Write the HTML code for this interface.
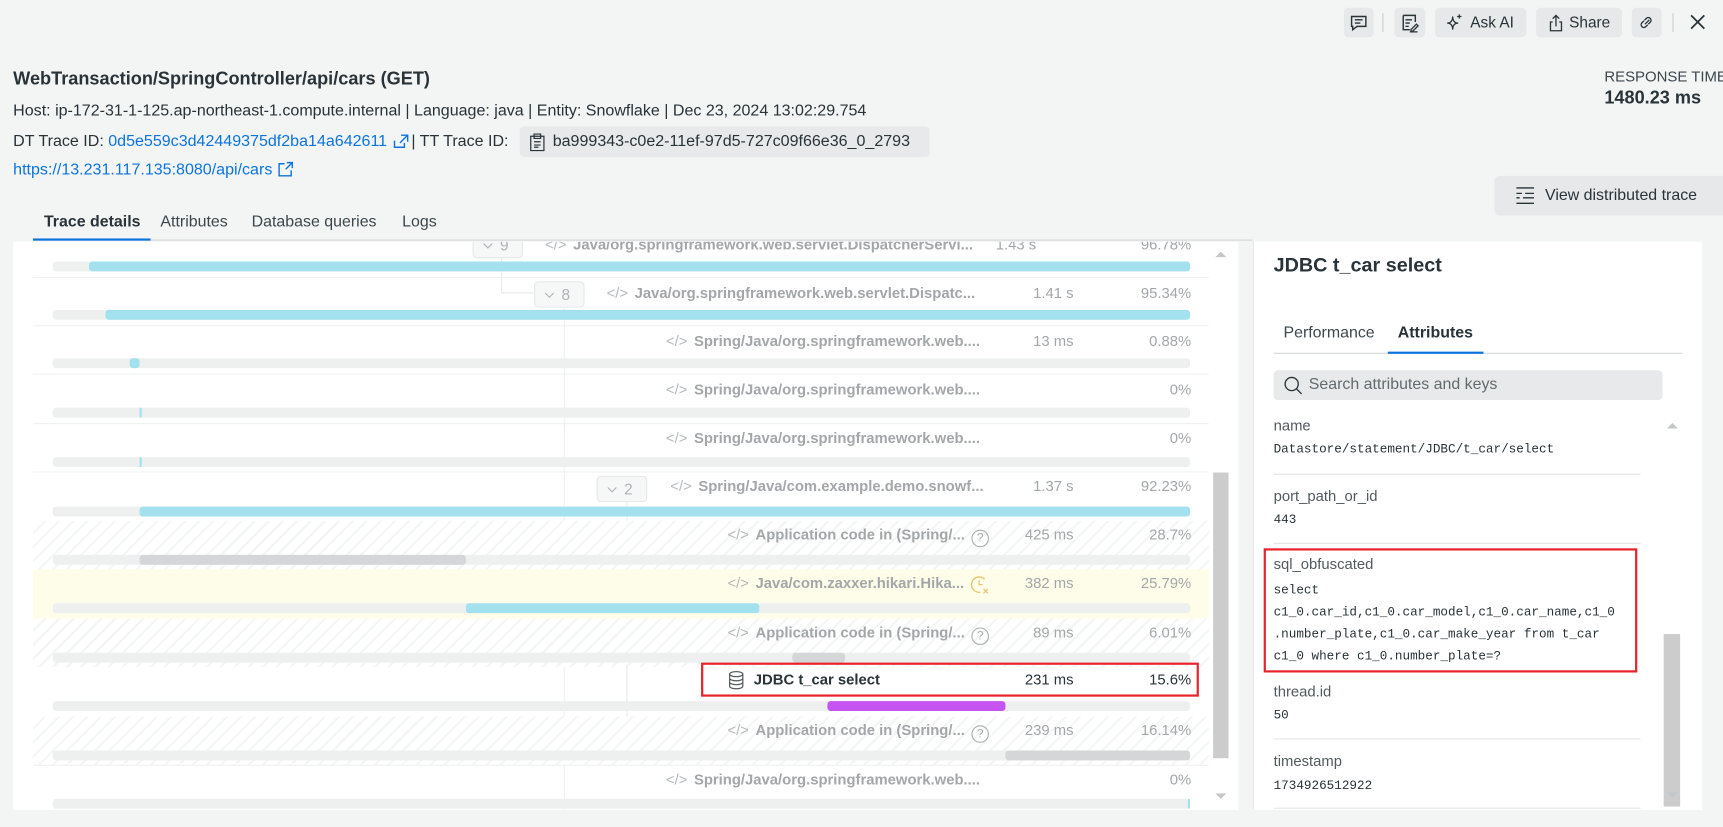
<!DOCTYPE html>
<html><head><meta charset="utf-8"><style>
*{box-sizing:border-box;margin:0;padding:0}
html,body{width:1723px;height:827px;overflow:hidden;background:#f3f4f4}
#w{position:absolute;left:0;top:0;width:1568px;height:752px;overflow:hidden;transform:scale(1.09885);transform-origin:0 0;font-family:"Liberation Sans",sans-serif;color:#293338}
.a{position:absolute;white-space:nowrap}
.btn{position:absolute;top:7px;height:27px;background:#e6e8e9;border-radius:4px;font-size:14px;line-height:27px;color:#293338}
.lnk{color:#0c74df}
.panel{position:absolute;background:#fff}
.row{position:absolute;left:30px;width:1070px;height:44px}
.hat{background:repeating-linear-gradient(135deg,#fff 0 7px,#f4f5f5 7px 9px)}
.bar{position:absolute;left:48px;width:1035px;height:9px;background:#eef0f0;border-radius:3px}
.f{position:absolute;top:0;height:9px;border-radius:3px}
.lbl{position:absolute;font-size:13.5px;color:#a3a7a9;font-weight:bold;white-space:nowrap}
.tm{position:absolute;font-size:13.5px;color:#a3a7a9;text-align:right;width:80px}
.pc{position:absolute;font-size:13.5px;color:#a3a7a9;text-align:right;width:80px;left:974px}
.cnt{position:absolute;width:46px;height:24px;border:1px solid #e6e8e9;background:#f6f7f7;border-radius:4px;font-size:14px;color:#b0b4b6;line-height:22px;padding-left:24px}
.cnt:before{content:"";position:absolute;left:10px;top:7px;width:5px;height:5px;border-right:1px solid #b0b4b6;border-bottom:1px solid #b0b4b6;transform:rotate(45deg)}
.code{font-weight:normal;margin-right:6px;color:#b5b9bb}
.k{position:absolute;left:1159px;font-size:13.5px;color:#525a5e}
.v{position:absolute;left:1159px;font-family:"Liberation Mono",monospace;font-size:11.5px;color:#293338}
.hr{position:absolute;left:1159px;width:334px;height:1px;background:#e3e5e6}
.q{display:inline-block;width:16px;height:16px;border:1.3px solid #a9adaf;border-radius:50%;font-size:11px;text-align:center;line-height:14px;color:#a9adaf;font-weight:normal;margin-left:6px;vertical-align:-2px}
</style></head><body><div id="w">

<!-- top buttons -->
<div class="btn" style="left:1223px;width:27px"><svg width="27" height="27" viewBox="0 0 27 27"><path d="M7 8h13v9h-8l-4 3v-3H7z" fill="none" stroke="#293338" stroke-width="1.3"/><path d="M10 11h7M10 14h5" stroke="#293338" stroke-width="1.2"/></svg></div>
<div class="a" style="left:1258px;top:12px;width:1px;height:17px;background:#c9cdcf"></div>
<div class="btn" style="left:1269px;width:28px"><svg width="27" height="27" viewBox="0 0 27 27"><path d="M8 7h11v6M8 7v13h6" fill="none" stroke="#293338" stroke-width="1.3"/><path d="M10 11h6M10 14h4M10 17h3M15 20l5-5 1.5 1.5-5 5H15z M14 22h7" fill="none" stroke="#293338" stroke-width="1.2"/></svg></div>
<div class="btn" style="left:1306px;width:83px;padding-left:32px">Ask AI<svg style="position:absolute;left:8px;top:5px" width="18" height="18" viewBox="0 0 18 18"><path d="M8 3c0 4 2 6 5 6-3 0-5 2-5 6 0-4-2-6-5-6 3 0 5-2 5-6z" fill="none" stroke="#293338" stroke-width="1.2"/><path d="M14 1v4M12 3h4" stroke="#293338" stroke-width="1.1"/></svg></div>
<div class="btn" style="left:1398px;width:78px;padding-left:30px">Share<svg style="position:absolute;left:9px;top:5px" width="18" height="18" viewBox="0 0 18 18"><path d="M6 8H4v8h10V8h-2M9 12V2M6 5l3-3 3 3" fill="none" stroke="#293338" stroke-width="1.2"/></svg></div>
<div class="btn" style="left:1485px;width:27px"><svg width="27" height="27" viewBox="0 0 27 27"><path d="M12 15l4-4M11 12l-2 2a2.5 2.5 0 003.5 3.5l2-2M15 15l2-2a2.5 2.5 0 00-3.5-3.5l-2 2" fill="none" stroke="#293338" stroke-width="1.2"/></svg></div>
<div class="a" style="left:1522px;top:12px;width:1px;height:17px;background:#c9cdcf"></div>
<svg class="a" style="left:1535px;top:10px" width="20" height="20" viewBox="0 0 20 20"><path d="M4 4l12 12M16 4L4 16" stroke="#293338" stroke-width="1.6"/></svg>

<!-- header -->
<div class="a" style="left:12px;top:63px;font-size:16.5px;font-weight:bold">WebTransaction/SpringController/api/cars (GET)</div>
<div class="a" style="left:12px;top:93px;font-size:14.6px">Host: ip-172-31-1-125.ap-northeast-1.compute.internal | Language: java | Entity: Snowflake | Dec 23, 2024 13:02:29.754</div>
<div class="a" style="left:12px;top:120px;font-size:14.6px">DT Trace ID: <span class="lnk">0d5e559c3d42449375df2ba14a642611</span> <svg width="18" height="16" viewBox="0 0 18 16" style="vertical-align:-3px"><path d="M3 8v6h9v-4M9 3h6v6M15 3l-7 7" fill="none" stroke="#0c74df" stroke-width="1.3"/></svg>| TT Trace ID:</div>
<div class="a" style="left:473px;top:115px;width:373px;height:28px;background:#e7e9ea;border-radius:4px;font-size:14.6px;line-height:28px;padding-left:30px">ba999343-c0e2-11ef-97d5-727c09f66e36_0_2793<svg style="position:absolute;left:9px;top:6px" width="14" height="17" viewBox="0 0 14 17"><path d="M1 3h12v13H1zM4 1h6v4H4zM4 8h6M4 11h6M4 13h4" fill="none" stroke="#293338" stroke-width="1.1"/></svg></div>
<div class="a lnk" style="left:12px;top:146px;font-size:14.6px">https://13.231.117.135:8080/api/cars <svg width="16" height="16" viewBox="0 0 16 16" style="vertical-align:-3px"><path d="M7 3H2v11h11V9M9 2h5v5M14 2L8 8" fill="none" stroke="#0c74df" stroke-width="1.3"/></svg></div>
<div class="a" style="left:1460px;top:62px;font-size:13.6px;color:#3d474c">RESPONSE TIME</div>
<div class="a" style="left:1460px;top:80px;font-size:16.5px;font-weight:bold">1480.23 ms</div>
<div class="a" style="left:1360px;top:160px;width:208px;height:36px;background:#e6e8e9;border-radius:5px 0 0 5px;font-size:14.5px;line-height:36px;padding-left:46px">View distributed trace<svg style="position:absolute;left:19px;top:9px" width="18" height="18" viewBox="0 0 18 18"><path d="M1 2h16M1 7h5M9 7h8M1 11h3M7 11h10M1 16h16" stroke="#293338" stroke-width="1.2"/></svg></div>

<!-- tabs -->
<div class="a" style="left:40px;top:194px;font-size:14.5px;font-weight:bold">Trace details</div>
<div class="a" style="left:146px;top:194px;font-size:14.5px;color:#3d474c">Attributes</div>
<div class="a" style="left:229px;top:194px;font-size:14.5px;color:#3d474c">Database queries</div>
<div class="a" style="left:366px;top:194px;font-size:14.5px;color:#3d474c">Logs</div>
<div class="a" style="left:30px;top:218px;width:1110px;height:1px;background:#d3d6d8"></div>
<div class="a" style="left:30px;top:217px;width:107px;height:2px;background:#0c74df"></div>

<!-- left panel -->
<div class="panel" style="left:12px;top:220px;width:1115px;height:517px;overflow:hidden">
 <div style="position:absolute;left:-12px;top:-220px;width:1127px;height:737px">
  <div class="a" style="left:456px;top:232px;width:1px;height:35px;background:#e8eaeb"></div>
  <div class="a" style="left:456px;top:266px;width:30px;height:1px;background:#e8eaeb"></div>
  <div class="a" style="left:513px;top:278px;width:1px;height:470px;background:#eef0f0"></div>
  <div class="a" style="left:570px;top:455px;width:1px;height:222px;background:#e8eaeb"></div>

  <div class="row" style="top:208px"><div class="cnt" style="left:400px;top:3px">9</div><div class="lbl" style="left:466px;top:7px"><span class="code">&lt;/&gt;</span>Java/org.springframework.web.servlet.DispatcherServl...</div><div class="tm" style="left:833px;top:7px">1.43 s</div><div class="pc" style="top:7px">96.78%</div></div>
  <div class="bar" style="top:238px"><div class="f" style="left:33px;right:0;background:#a2e1ed"></div></div>
  <div class="a" style="left:30px;top:252px;width:1070px;height:1px;background:#f0f1f2"></div>

  <div class="row" style="top:253px"><div class="cnt" style="left:456px;top:3px">8</div><div class="lbl" style="left:522px;top:6px"><span class="code">&lt;/&gt;</span>Java/org.springframework.web.servlet.Dispatc...</div><div class="tm" style="left:867px;top:6px">1.41 s</div><div class="pc" style="top:6px">95.34%</div></div>
  <div class="bar" style="top:282px"><div class="f" style="left:48px;right:0;background:#a2e1ed"></div></div>
  <div class="a" style="left:30px;top:296px;width:1070px;height:1px;background:#f0f1f2"></div>

  <div class="row" style="top:297px"><div class="lbl" style="left:576px;top:6px"><span class="code">&lt;/&gt;</span>Spring/Java/org.springframework.web....</div><div class="tm" style="left:867px;top:6px">13 ms</div><div class="pc" style="top:6px">0.88%</div></div>
  <div class="bar" style="top:326px"><div class="f" style="left:70px;width:9px;background:#a2e1ed"></div></div>
  <div class="a" style="left:30px;top:340px;width:1070px;height:1px;background:#f0f1f2"></div>

  <div class="row" style="top:341px"><div class="lbl" style="left:576px;top:6px"><span class="code">&lt;/&gt;</span>Spring/Java/org.springframework.web....</div><div class="pc" style="top:6px">0%</div></div>
  <div class="bar" style="top:371px"><div class="f" style="left:79px;width:2px;background:#a2e1ed"></div></div>
  <div class="a" style="left:30px;top:385px;width:1070px;height:1px;background:#f0f1f2"></div>

  <div class="row" style="top:386px"><div class="lbl" style="left:576px;top:5px"><span class="code">&lt;/&gt;</span>Spring/Java/org.springframework.web....</div><div class="pc" style="top:5px">0%</div></div>
  <div class="bar" style="top:416px"><div class="f" style="left:79px;width:2px;background:#a2e1ed"></div></div>
  <div class="a" style="left:30px;top:429px;width:1070px;height:1px;background:#f0f1f2"></div>

  <div class="row" style="top:430px"><div class="cnt" style="left:513px;top:3px">2</div><div class="lbl" style="left:580px;top:5px"><span class="code">&lt;/&gt;</span>Spring/Java/com.example.demo.snowf...</div><div class="tm" style="left:867px;top:5px">1.37 s</div><div class="pc" style="top:5px">92.23%</div></div>
  <div class="bar" style="top:461px"><div class="f" style="left:79px;right:0;background:#a2e1ed"></div></div>

  <div class="row hat" style="top:474px"><div class="lbl" style="left:632px;top:5px"><span class="code">&lt;/&gt;</span>Application code in (Spring/...<span class="q">?</span></div><div class="tm" style="left:867px;top:5px">425 ms</div><div class="pc" style="top:5px">28.7%</div></div>
  <div class="bar" style="top:505px"><div class="f" style="left:79px;width:297px;background:#d4d6d7"></div></div>

  <div class="row" style="top:518px;background:#fefde9;height:45px"><div class="lbl" style="left:632px;top:5px"><span class="code">&lt;/&gt;</span>Java/com.zaxxer.hikari.Hika...</div><svg class="a" style="left:853px;top:5px" width="18" height="18" viewBox="0 0 18 18"><path d="M13 4a7 7 0 10-4 12" fill="none" stroke="#e3c46a" stroke-width="1.2"/><path d="M8 5v4h3M12 13l4 4M16 13l-4 4" fill="none" stroke="#e3c46a" stroke-width="1.1"/></svg><div class="tm" style="left:867px;top:5px">382 ms</div><div class="pc" style="top:5px">25.79%</div></div>
  <div class="bar" style="top:549px"><div class="f" style="left:376px;width:267px;background:#a2e1ed"></div></div>

  <div class="row hat" style="top:563px"><div class="lbl" style="left:632px;top:5px"><span class="code">&lt;/&gt;</span>Application code in (Spring/...<span class="q">?</span></div><div class="tm" style="left:867px;top:5px">89 ms</div><div class="pc" style="top:5px">6.01%</div></div>
  <div class="bar" style="top:594px"><div class="f" style="left:673px;width:48px;background:#d4d6d7"></div></div>

  <div class="row" style="top:607px"><svg class="a" style="left:632px;top:3px" width="16" height="18" viewBox="0 0 16 18"><ellipse cx="8" cy="3.5" rx="6" ry="2.3" fill="none" stroke="#525a5e" stroke-width="1.1"/><path d="M2 3.5v11c0 1.3 2.7 2.3 6 2.3s6-1 6-2.3v-11M2 7.2c0 1.3 2.7 2.3 6 2.3s6-1 6-2.3M2 10.8c0 1.3 2.7 2.3 6 2.3s6-1 6-2.3" fill="none" stroke="#525a5e" stroke-width="1.1"/></svg><div class="lbl" style="left:656px;top:4px;color:#293338">JDBC t_car select</div><div class="tm" style="left:867px;top:4px;color:#293338">231 ms</div><div class="pc" style="top:4px;color:#293338">15.6%</div></div>
  <div class="a" style="left:638px;top:603px;width:453px;height:31px;border:2.5px solid #e8212a"></div>
  <div class="bar" style="top:638px"><div class="f" style="left:705px;width:162px;background:#c654f0"></div></div>

  <div class="row hat" style="top:652px"><div class="lbl" style="left:632px;top:5px"><span class="code">&lt;/&gt;</span>Application code in (Spring/...<span class="q">?</span></div><div class="tm" style="left:867px;top:5px">239 ms</div><div class="pc" style="top:5px">16.14%</div></div>
  <div class="bar" style="top:683px"><div class="f" style="left:867px;right:0;background:#d4d6d7"></div></div>
  <div class="a" style="left:30px;top:696px;width:1070px;height:1px;background:#f0f1f2"></div>

  <div class="row" style="top:697px;height:40px"><div class="lbl" style="left:576px;top:5px"><span class="code">&lt;/&gt;</span>Spring/Java/org.springframework.web....</div><div class="pc" style="top:5px">0%</div></div>
  <div class="bar" style="top:727px"><div class="f" style="right:0;width:2px;background:#a2e1ed"></div></div>

  <div class="a" style="left:1104px;top:430px;width:14px;height:260px;background:#cccccc"></div>
  <div class="a" style="left:1106px;top:229px;border:5px solid transparent;border-bottom:5px solid #c4c7c9;border-top:0"></div>
  <div class="a" style="left:1106px;top:722px;border:5px solid transparent;border-top:5px solid #c4c7c9;border-bottom:0"></div>
 </div>
</div>

<!-- right panel -->
<div class="panel" style="left:1140px;top:220px;width:409px;height:517px;border-left:1px solid #e3e5e6"></div>
<div class="a" style="left:1159px;top:231px;font-size:18px;font-weight:bold">JDBC t_car select</div>
<div class="a" style="left:1168px;top:295px;font-size:14.5px;color:#3d474c">Performance</div>
<div class="a" style="left:1272px;top:295px;font-size:14.5px;font-weight:bold">Attributes</div>
<div class="a" style="left:1159px;top:321px;width:372px;height:1px;background:#d3d6d8"></div>
<div class="a" style="left:1263px;top:320px;width:87px;height:2px;background:#0c74df"></div>
<div class="a" style="left:1159px;top:337px;width:354px;height:27px;background:#e8e9ea;border-radius:4px;font-size:14.5px;line-height:27px;padding-left:32px;color:#636b6f">Search attributes and keys<svg style="position:absolute;left:9px;top:5px" width="18" height="18" viewBox="0 0 18 18"><circle cx="7.5" cy="7.5" r="6" fill="none" stroke="#293338" stroke-width="1.2"/><path d="M12 12l4.5 4.5" stroke="#293338" stroke-width="1.2"/></svg></div>

<div class="k" style="top:380px">name</div>
<div class="v" style="top:403px">Datastore/statement/JDBC/t_car/select</div>
<div class="hr" style="top:431px"></div>
<div class="k" style="top:444px">port_path_or_id</div>
<div class="v" style="top:467px">443</div>
<div class="hr" style="top:494px"></div>
<div class="k" style="top:506px">sql_obfuscated</div>
<div class="v" style="top:528px;line-height:20px">select<br>c1_0.car_id,c1_0.car_model,c1_0.car_name,c1_0<br>.number_plate,c1_0.car_make_year from t_car<br>c1_0 where c1_0.number_plate=?</div>
<div class="a" style="left:1150px;top:499px;width:340px;height:113px;border:2.5px solid #e8212a"></div>
<div class="k" style="top:622px">thread.id</div>
<div class="v" style="top:645px">50</div>
<div class="hr" style="top:672px"></div>
<div class="k" style="top:685px">timestamp</div>
<div class="v" style="top:709px">1734926512922</div>
<div class="hr" style="top:735px"></div>
<div class="a" style="left:1514px;top:577px;width:15px;height:157px;background:#cccccc"></div>
<div class="a" style="left:1517px;top:385px;border:5px solid transparent;border-bottom:5px solid #c4c7c9;border-top:0"></div>
<div class="a" style="left:1517px;top:721px;border:5px solid transparent;border-top:5px solid #c4c7c9;border-bottom:0"></div>
</div></body></html>
